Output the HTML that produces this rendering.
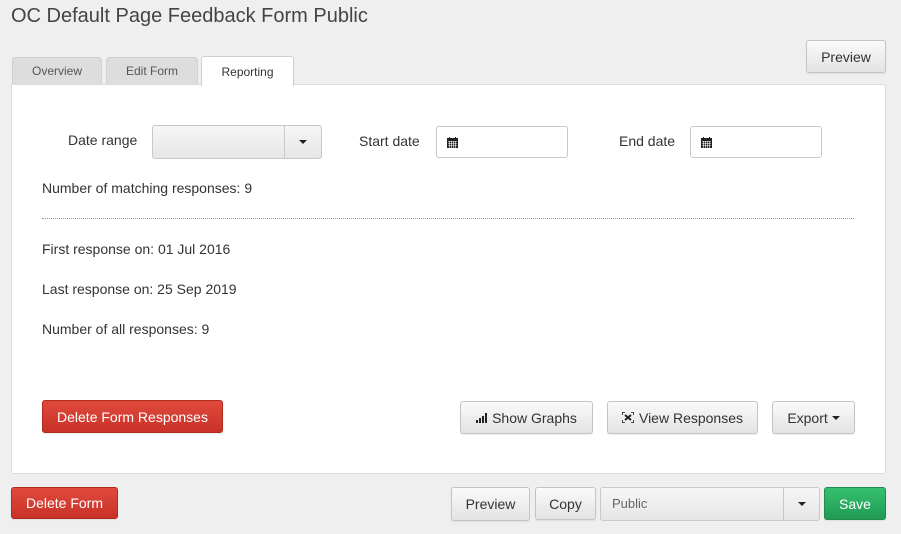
<!DOCTYPE html>
<html><head><style>
*{box-sizing:border-box}
body{margin:0;width:901px;height:534px;background:#efefef;font-family:"Liberation Sans",sans-serif;font-size:14px;color:#333;position:relative;overflow:hidden}
.a{position:absolute}
.btn{position:absolute;border:1px solid #c4c4c4;border-radius:3px;background:linear-gradient(#fafafa,#e3e3e3);display:flex;align-items:center;justify-content:center;font-size:14px;color:#333;box-shadow:0 1px 1px rgba(0,0,0,.08)}
.red{background:linear-gradient(#e04a3c,#c93128);border-color:#b02a20;color:#fff}
.green{background:linear-gradient(#35c170,#229a55);border-color:#1f8c4c;color:#fff}
.tab{position:absolute;top:57px;height:27px;background:#ddd;border:1px solid #d0d0d0;border-bottom:none;border-radius:3px 3px 0 0;display:flex;align-items:center;justify-content:center;font-size:12px;color:#555}
.inp{position:absolute;border:1px solid #c8c8c8;border-radius:3px;background:#fff}
.car{width:0;height:0;border-left:4px solid transparent;border-right:4px solid transparent;border-top:4px solid #222;display:inline-block}
.cal{position:absolute;left:10px;top:10px}
</style></head><body>
<div class="a" style="left:11px;top:5px;font-size:20px;color:#444">OC Default Page Feedback Form Public</div>
<div class="btn" style="left:806px;top:40px;width:80px;height:33px">Preview</div>
<div class="a" style="left:11px;top:84px;width:875px;height:390px;background:#fff;border:1px solid #ddd;border-radius:0 3px 3px 3px"></div>
<div class="tab" style="left:12px;width:90px">Overview</div>
<div class="tab" style="left:106px;width:92px">Edit Form</div>
<div class="tab" style="left:201px;width:93px;top:56px;height:30px;background:#fff;color:#333">Reporting</div>
<div class="a" style="left:68px;top:132px">Date range</div>
<div class="inp" style="left:152px;top:125px;width:170px;height:34px;background:linear-gradient(#f6f6f6,#e6e6e6)"><div class="a" style="left:131px;top:0;bottom:0;border-left:1px solid #c8c8c8;width:37px;display:flex;align-items:center;justify-content:center"><span class="car"></span></div></div>
<div class="a" style="left:359px;top:133px">Start date</div>
<div class="inp" style="left:436px;top:126px;width:132px;height:32px"><svg class="cal" width="11" height="11"><rect x="0" y="1" width="11" height="10" fill="#222"/><rect x="2" y="0" width="1" height="2" fill="#222"/><rect x="8" y="0" width="1" height="2" fill="#222"/><path d="M1 4.5h9M1 6.5h9M1 8.5h9" stroke="#fff" stroke-width="0.6"/><path d="M2.5 4v7M4.5 4v7M6.5 4v7M8.5 4v7" stroke="#fff" stroke-width="0.6"/></svg></div>
<div class="a" style="left:619px;top:133px">End date</div>
<div class="inp" style="left:690px;top:126px;width:132px;height:32px"><svg class="cal" width="11" height="11"><rect x="0" y="1" width="11" height="10" fill="#222"/><rect x="2" y="0" width="1" height="2" fill="#222"/><rect x="8" y="0" width="1" height="2" fill="#222"/><path d="M1 4.5h9M1 6.5h9M1 8.5h9" stroke="#fff" stroke-width="0.6"/><path d="M2.5 4v7M4.5 4v7M6.5 4v7M8.5 4v7" stroke="#fff" stroke-width="0.6"/></svg></div>
<div class="a" style="left:42px;top:180px">Number of matching responses: 9</div>
<div class="a" style="left:42px;top:218px;width:812px;border-top:1px dotted #999"></div>
<div class="a" style="left:42px;top:241px">First response on: 01 Jul 2016</div>
<div class="a" style="left:42px;top:281px">Last response on: 25 Sep 2019</div>
<div class="a" style="left:42px;top:321px">Number of all responses: 9</div>
<div class="btn red" style="left:42px;top:400px;width:181px;height:33px">Delete Form Responses</div>
<div class="btn" style="left:460px;top:401px;width:133px;height:33px"><svg width="12" height="10" style="margin-right:4px"><rect x="0" y="7" width="2" height="3" fill="#222"/><rect x="3" y="5" width="2" height="5" fill="#222"/><rect x="6" y="3" width="2" height="7" fill="#222"/><rect x="9" y="0" width="2" height="10" fill="#222"/></svg>Show Graphs</div>
<div class="btn" style="left:607px;top:401px;width:151px;height:33px"><svg width="12" height="11" style="margin-right:5px"><path d="M0 3V0h3M9 0h3v3M12 8v3H9M3 11H0V8" stroke="#222" stroke-width="1.6" fill="none"/><path d="M3 3l6 5M9 3L3 8" stroke="#222" stroke-width="2"/></svg>View Responses</div>
<div class="btn" style="left:772px;top:401px;width:83px;height:33px">Export&nbsp;<span class="car"></span></div>
<div class="btn red" style="left:11px;top:487px;width:107px;height:32px">Delete Form</div>
<div class="btn" style="left:451px;top:487px;width:79px;height:34px">Preview</div>
<div class="btn" style="left:535px;top:487px;width:61px;height:33px">Copy</div>
<div class="inp" style="left:600px;top:487px;width:220px;height:34px;background:linear-gradient(#f6f6f6,#e6e6e6);font-size:13px;color:#666"><span class="a" style="left:11px;top:8px">Public</span><div class="a" style="left:182px;top:0;bottom:0;border-left:1px solid #c8c8c8;width:37px;display:flex;align-items:center;justify-content:center"><span class="car"></span></div></div>
<div class="btn green" style="left:824px;top:487px;width:62px;height:33px">Save</div>
</body></html>
